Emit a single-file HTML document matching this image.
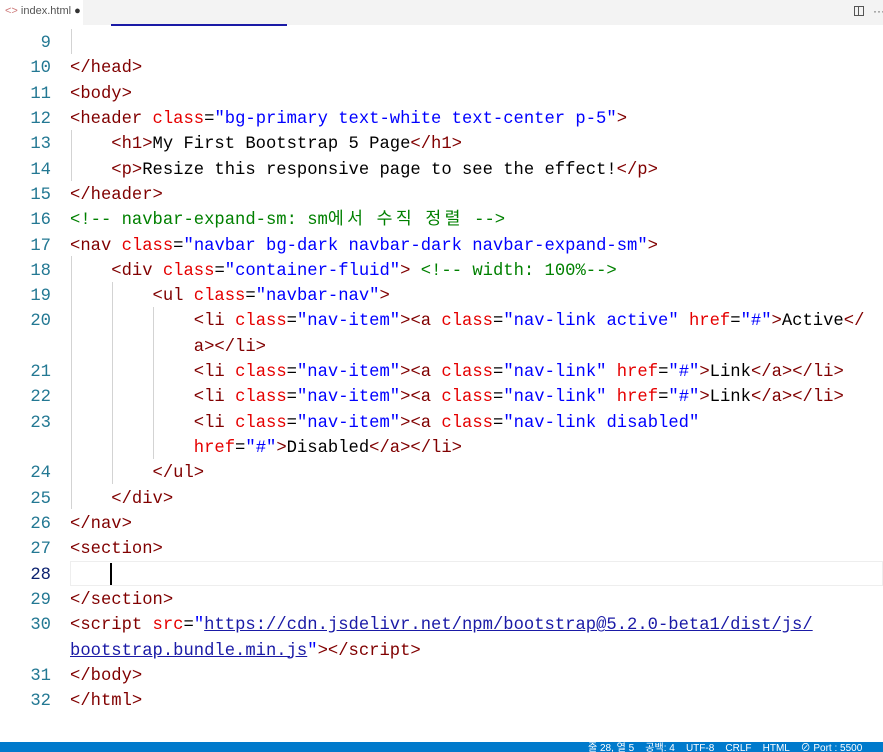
<!DOCTYPE html>
<html><head><meta charset="utf-8"><style>
*{margin:0;padding:0;box-sizing:border-box}
body{width:883px;height:752px;overflow:hidden;background:#fff;position:relative;font-family:"Liberation Mono","Noto Sans CJK KR",monospace}
.tabbar{position:absolute;left:0;top:0;width:883px;height:25px;background:#f3f3f3}
.tab{position:absolute;left:0;top:0;width:83px;height:25px;background:#fff;font-family:"Liberation Sans",sans-serif;font-size:11px;color:#555;line-height:22px;padding-left:5px;white-space:nowrap;overflow:hidden}
.rows{position:absolute;left:0;top:2.5px;width:883px;height:740px}
.row{position:absolute;left:0;height:25.32px;line-height:25.32px;font-size:17.2px;white-space:pre;width:883px}
.ln{position:absolute;left:0;width:51px;text-align:right;color:#237893}
.tx{position:absolute;left:70px}
.t{color:#800000}.a{color:#e50000}.s{color:#0000ff}.c{color:#008000}.u{color:#1a1aa6;text-decoration:underline}
.k{letter-spacing:3.4px}
.g{position:absolute;width:1px;background:#d3d3d3}
.status{position:absolute;left:0;top:742px;width:883px;height:10px;background:#007acc;overflow:hidden;color:#fff;font-family:"Liberation Sans","Noto Sans CJK KR",sans-serif;font-size:10px;line-height:14px;white-space:pre}
</style></head><body>
<div class="tabbar"><div class="tab"><span style="color:#c77">&lt;&gt;</span> index.html <span style="color:#333">●</span></div>
<div style="position:absolute;left:854px;top:6px;width:10px;height:10px;border:1px solid #555"></div>
<div style="position:absolute;left:858px;top:6px;width:1px;height:10px;background:#555"></div>
<div style="position:absolute;left:873px;top:4px;font-size:12px;color:#555;font-family:'Liberation Sans',sans-serif">···</div>
</div>
<div style="position:absolute;left:111px;top:24px;width:176px;height:2px;background:#1a1aa6"></div>
<div class="rows">
<div class="g" style="left:71px;top:26px;height:25px"></div>
<div class="g" style="left:71px;top:127px;height:51px"></div>
<div class="g" style="left:71px;top:253px;height:253px"></div>
<div class="g" style="left:112px;top:279px;height:202px"></div>
<div class="g" style="left:153px;top:304px;height:152px"></div>
<div style="position:absolute;left:70px;top:558px;width:813px;height:25px;border:1px solid #eee"></div>
<div style="position:absolute;left:110px;top:560px;width:2px;height:22px;background:#000"></div>

<div class="row" style="top:28.4px"><span class="ln">9</span></div>
<div class="row" style="top:53.7px"><span class="ln">10</span><span class="tx t">&lt;/head&gt;</span></div>
<div class="row" style="top:79.0px"><span class="ln">11</span><span class="tx t">&lt;body&gt;</span></div>
<div class="row" style="top:104.4px"><span class="ln">12</span><span class="tx"><span class="t">&lt;header</span> <span class="a">class</span>=<span class="s">"bg-primary text-white text-center p-5"</span><span class="t">&gt;</span></span></div>
<div class="row" style="top:129.7px"><span class="ln">13</span><span class="tx">    <span class="t">&lt;h1&gt;</span>My First Bootstrap 5 Page<span class="t">&lt;/h1&gt;</span></span></div>
<div class="row" style="top:155.0px"><span class="ln">14</span><span class="tx">    <span class="t">&lt;p&gt;</span>Resize this responsive page to see the effect!<span class="t">&lt;/p&gt;</span></span></div>
<div class="row" style="top:180.3px"><span class="ln">15</span><span class="tx t">&lt;/header&gt;</span></div>
<div class="row" style="top:205.6px"><span class="ln">16</span><span class="tx c">&lt;!-- navbar-expand-sm: sm<span class="k">에서</span> <span class="k">수직</span> <span class="k">정렬</span> --&gt;</span></div>
<div class="row" style="top:231.0px"><span class="ln">17</span><span class="tx"><span class="t">&lt;nav</span> <span class="a">class</span>=<span class="s">"navbar bg-dark navbar-dark navbar-expand-sm"</span><span class="t">&gt;</span></span></div>
<div class="row" style="top:256.3px"><span class="ln">18</span><span class="tx">    <span class="t">&lt;div</span> <span class="a">class</span>=<span class="s">"container-fluid"</span><span class="t">&gt;</span> <span class="c">&lt;!-- width: 100%--&gt;</span></span></div>
<div class="row" style="top:281.6px"><span class="ln">19</span><span class="tx">        <span class="t">&lt;ul</span> <span class="a">class</span>=<span class="s">"navbar-nav"</span><span class="t">&gt;</span></span></div>
<div class="row" style="top:306.9px"><span class="ln">20</span><span class="tx">            <span class="t">&lt;li</span> <span class="a">class</span>=<span class="s">"nav-item"</span><span class="t">&gt;&lt;a</span> <span class="a">class</span>=<span class="s">"nav-link active"</span> <span class="a">href</span>=<span class="s">"#"</span><span class="t">&gt;</span>Active<span class="t">&lt;/</span></span></div>
<div class="row" style="top:332.2px"><span class="tx">            <span class="t">a&gt;&lt;/li&gt;</span></span></div>
<div class="row" style="top:357.6px"><span class="ln">21</span><span class="tx">            <span class="t">&lt;li</span> <span class="a">class</span>=<span class="s">"nav-item"</span><span class="t">&gt;&lt;a</span> <span class="a">class</span>=<span class="s">"nav-link"</span> <span class="a">href</span>=<span class="s">"#"</span><span class="t">&gt;</span>Link<span class="t">&lt;/a&gt;&lt;/li&gt;</span></span></div>
<div class="row" style="top:382.9px"><span class="ln">22</span><span class="tx">            <span class="t">&lt;li</span> <span class="a">class</span>=<span class="s">"nav-item"</span><span class="t">&gt;&lt;a</span> <span class="a">class</span>=<span class="s">"nav-link"</span> <span class="a">href</span>=<span class="s">"#"</span><span class="t">&gt;</span>Link<span class="t">&lt;/a&gt;&lt;/li&gt;</span></span></div>
<div class="row" style="top:408.2px"><span class="ln">23</span><span class="tx">            <span class="t">&lt;li</span> <span class="a">class</span>=<span class="s">"nav-item"</span><span class="t">&gt;&lt;a</span> <span class="a">class</span>=<span class="s">"nav-link disabled"</span></span></div>
<div class="row" style="top:433.5px"><span class="tx">            <span class="a">href</span>=<span class="s">"#"</span><span class="t">&gt;</span>Disabled<span class="t">&lt;/a&gt;&lt;/li&gt;</span></span></div>
<div class="row" style="top:458.8px"><span class="ln">24</span><span class="tx">        <span class="t">&lt;/ul&gt;</span></span></div>
<div class="row" style="top:484.2px"><span class="ln">25</span><span class="tx">    <span class="t">&lt;/div&gt;</span></span></div>
<div class="row" style="top:509.5px"><span class="ln">26</span><span class="tx t">&lt;/nav&gt;</span></div>
<div class="row" style="top:534.8px"><span class="ln">27</span><span class="tx t">&lt;section&gt;</span></div>
<div class="row" style="top:560.1px"><span class="ln" style="color:#0b216f">28</span></div>
<div class="row" style="top:585.4px"><span class="ln">29</span><span class="tx t">&lt;/section&gt;</span></div>
<div class="row" style="top:610.8px"><span class="ln">30</span><span class="tx"><span class="t">&lt;script</span> <span class="a">src</span>=<span class="s">"</span><span class="u">https://cdn.jsdelivr.net/npm/bootstrap@5.2.0-beta1/dist/js/</span></span></div>
<div class="row" style="top:636.1px"><span class="tx"><span class="u">bootstrap.bundle.min.js</span><span class="s">"</span><span class="t">&gt;&lt;/script&gt;</span></span></div>
<div class="row" style="top:661.4px"><span class="ln">31</span><span class="tx t">&lt;/body&gt;</span></div>
<div class="row" style="top:686.7px"><span class="ln">32</span><span class="tx t">&lt;/html&gt;</span></div>
</div>
<div class="status"><span style="position:absolute;left:588px;top:0">줄 28, 열 5    공백: 4    UTF-8    CRLF    HTML    ⊘ Port : 5500</span></div>
</body></html>
